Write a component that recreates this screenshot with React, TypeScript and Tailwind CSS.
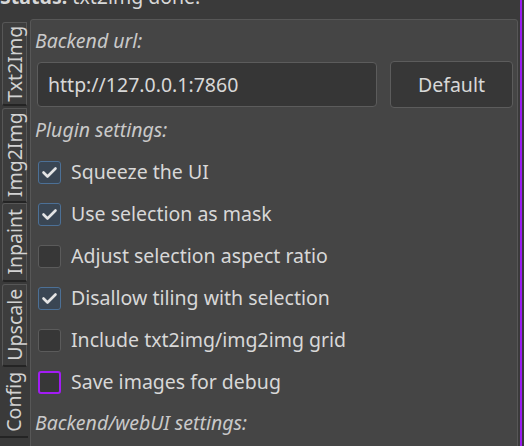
const TABS = [
  { label: 'Txt2Img', h: 'h-[84px]', mt: 'mt-[3px]', selected: false },
  { label: 'Img2Img', h: 'h-[95px]', mt: 'mt-[2px]', selected: false },
  { label: 'Inpaint', h: 'h-[79px]', mt: 'mt-0', selected: false },
  { label: 'Upscale', h: 'h-[83px]', mt: 'mt-[2px]', selected: false },
  { label: 'Config', h: 'h-[71px]', mt: 'mt-0', selected: true },
]

const OPTIONS = [
  { label: 'Squeeze the UI', checked: true },
  { label: 'Use selection as mask', checked: true },
  { label: 'Adjust selection aspect ratio', checked: false },
  { label: 'Disallow tiling with selection', checked: true },
  { label: 'Include txt2img/img2img grid', checked: false },
  { label: 'Save images for debug', checked: false, focused: true },
]

function Tab({ label, h, mt, selected }: { label: string; h: string; mt: string; selected: boolean }) {
  return (
    <div
      className={
        selected
          ? `${h} ${mt} w-[28px] shrink-0 flex items-center justify-center border-b-2 border-b-[#242424]`
          : `${h} ${mt} ml-[2px] w-[25px] shrink-0 flex items-center justify-center rounded-l-[3px] border border-[#575757] border-b-2 border-b-[#242424] bg-[#3d3d3d]`
      }
    >
      <span className="-rotate-90 whitespace-nowrap text-[19.5px] leading-none text-[#d2d2d2]">{label}</span>
    </div>
  )
}

function Checkbox({ checked, focused }: { checked: boolean; focused?: boolean }) {
  const cls = focused
    ? 'border-2 border-[#a21cf4] bg-[#373737]'
    : checked
      ? 'border border-[#4c7096] bg-[#3a4653]'
      : 'border border-[#5b5b5b] bg-[#373737]'
  return (
    <div className={`w-[23px] h-[23px] shrink-0 rounded-[3px] flex items-center justify-center ${cls}`}>
      {checked && (
        <svg width="21" height="21" viewBox="0 0 21 21">
          <path d="M4.5 10.5 L8.5 14.5 L16.5 6.5" fill="none" stroke="#e4e4e4" strokeWidth="2.6" strokeLinecap="round" strokeLinejoin="round" />
        </svg>
      )}
    </div>
  )
}

export default function App() {
  return (
    <div
      className="w-[524px] h-[446px] overflow-hidden bg-[#3a3a3a] flex text-[#d8d8d8]"
      style={{ fontFamily: '"Noto Sans", "Open Sans", sans-serif' }}
    >
      <div className="w-[520px] flex flex-col">
        <div className="h-[19px] shrink-0">
          <div className="-translate-y-[15px] leading-[24px] text-[19.5px] whitespace-nowrap">
            <span className="font-bold">Status:</span> txt2img done.
          </div>
        </div>
        <div className="flex flex-1">
          <div className="w-[30px] flex flex-col">
            {TABS.map((t) => (
              <Tab key={t.label} {...t} />
            ))}
          </div>
          <div className="w-[488px] h-[440px] shrink-0 border border-[#575757] rounded-[3px] bg-[#454545] flex flex-col">
            <div className="h-[41px] shrink-0 flex items-center pl-[4px] italic text-[19.5px] text-[#c9c9c9]">Backend url:</div>
            <div className="h-[47px] shrink-0 flex items-center">
              <div className="ml-[6px] w-[340px] h-[45px] rounded-[4px] border border-[#5c5c5c] bg-[#363636] flex items-center pl-[10px] text-[19.5px]">
                http://127.0.0.1:7860
              </div>
              <button className="ml-[13px] w-[123px] h-[47px] rounded-[4px] border border-[#5c5c5c] bg-[#373737] text-[19.5px] text-[#d8d8d8]">
                Default
              </button>
            </div>
            <div className="h-[43px] shrink-0 flex items-center pl-[4px] italic text-[19.5px] text-[#c9c9c9]">Plugin settings:</div>
            {OPTIONS.map((o) => (
              <div key={o.label} className="h-[42px] shrink-0 flex items-center pl-[7px] gap-[10px] text-[19.5px]">
                <Checkbox checked={o.checked} focused={o.focused} />
                <span>{o.label}</span>
              </div>
            ))}
            <div className="h-[40px] shrink-0 flex items-center pl-[4px] italic text-[19.5px] text-[#c9c9c9]">Backend/webUI settings:</div>
          </div>
        </div>
      </div>
      <div className="w-[2px] h-full bg-[#9a1cf0]" />
    </div>
  )
}
